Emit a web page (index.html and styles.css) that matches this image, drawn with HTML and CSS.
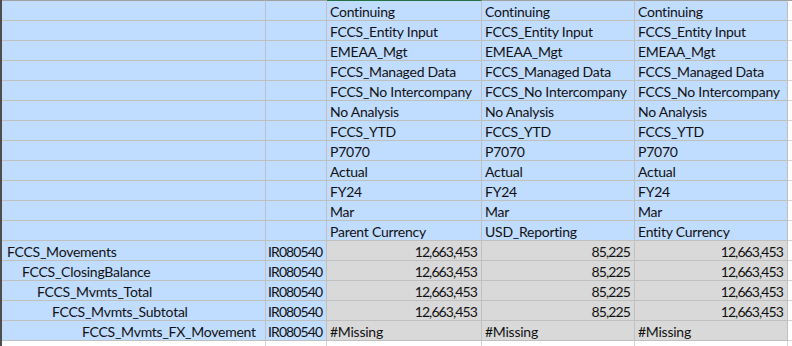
FILE: index.html
```html
<!DOCTYPE html>
<html>
<head>
<meta charset="utf-8">
<link rel="stylesheet" href="styles.css">
</head>
<body>
<div class="sheet">
  <div class="row first">
    <div class="c a"></div><div class="c b"></div>
    <div class="c h sel">Continuing</div><div class="c h">Continuing</div><div class="c h">Continuing</div><div class="c f"></div>
  </div>
  <div class="row">
    <div class="c a"></div><div class="c b"></div>
    <div class="c h">FCCS_Entity Input</div><div class="c h">FCCS_Entity Input</div><div class="c h">FCCS_Entity Input</div><div class="c f"></div>
  </div>
  <div class="row">
    <div class="c a"></div><div class="c b"></div>
    <div class="c h">EMEAA_Mgt</div><div class="c h">EMEAA_Mgt</div><div class="c h">EMEAA_Mgt</div><div class="c f"></div>
  </div>
  <div class="row">
    <div class="c a"></div><div class="c b"></div>
    <div class="c h">FCCS_Managed Data</div><div class="c h">FCCS_Managed Data</div><div class="c h">FCCS_Managed Data</div><div class="c f"></div>
  </div>
  <div class="row">
    <div class="c a"></div><div class="c b"></div>
    <div class="c h">FCCS_No Intercompany</div><div class="c h">FCCS_No Intercompany</div><div class="c h">FCCS_No Intercompany</div><div class="c f"></div>
  </div>
  <div class="row">
    <div class="c a"></div><div class="c b"></div>
    <div class="c h">No Analysis</div><div class="c h">No Analysis</div><div class="c h">No Analysis</div><div class="c f"></div>
  </div>
  <div class="row">
    <div class="c a"></div><div class="c b"></div>
    <div class="c h">FCCS_YTD</div><div class="c h">FCCS_YTD</div><div class="c h">FCCS_YTD</div><div class="c f"></div>
  </div>
  <div class="row">
    <div class="c a"></div><div class="c b"></div>
    <div class="c h">P7070</div><div class="c h">P7070</div><div class="c h">P7070</div><div class="c f"></div>
  </div>
  <div class="row">
    <div class="c a"></div><div class="c b"></div>
    <div class="c h">Actual</div><div class="c h">Actual</div><div class="c h">Actual</div><div class="c f"></div>
  </div>
  <div class="row">
    <div class="c a"></div><div class="c b"></div>
    <div class="c h">FY24</div><div class="c h">FY24</div><div class="c h">FY24</div><div class="c f"></div>
  </div>
  <div class="row">
    <div class="c a"></div><div class="c b"></div>
    <div class="c h">Mar</div><div class="c h">Mar</div><div class="c h">Mar</div><div class="c f"></div>
  </div>
  <div class="row">
    <div class="c a"></div><div class="c b"></div>
    <div class="c h">Parent Currency</div><div class="c h">USD_Reporting</div><div class="c h">Entity Currency</div><div class="c f"></div>
  </div>
  <div class="row">
    <div class="c a l0">FCCS_Movements</div><div class="c b">IR080540</div>
    <div class="c d num">12,663,453</div><div class="c d num">85,225</div><div class="c d num">12,663,453</div><div class="c f"></div>
  </div>
  <div class="row">
    <div class="c a l1">FCCS_ClosingBalance</div><div class="c b">IR080540</div>
    <div class="c d num">12,663,453</div><div class="c d num">85,225</div><div class="c d num">12,663,453</div><div class="c f"></div>
  </div>
  <div class="row">
    <div class="c a l2">FCCS_Mvmts_Total</div><div class="c b">IR080540</div>
    <div class="c d num">12,663,453</div><div class="c d num">85,225</div><div class="c d num">12,663,453</div><div class="c f"></div>
  </div>
  <div class="row">
    <div class="c a l3">FCCS_Mvmts_Subtotal</div><div class="c b">IR080540</div>
    <div class="c d num">12,663,453</div><div class="c d num">85,225</div><div class="c d num">12,663,453</div><div class="c f"></div>
  </div>
  <div class="row">
    <div class="c a l5">FCCS_Mvmts_FX_Movement</div><div class="c b">IR080540</div>
    <div class="c d">#Missing</div><div class="c d">#Missing</div><div class="c d">#Missing</div><div class="c f"></div>
  </div>
  <div class="row empty">
    <div class="c e"></div><div class="c e"></div><div class="c e"></div><div class="c e"></div><div class="c e"></div><div class="c e"></div>
  </div>
</div>
</body>
</html>
```
FILE: styles.css
```css
html, body {
  margin: 0;
  padding: 0;
  background: #ffffff;
}
.sheet {
  border-left: 2px solid #4d4d4d;
  font-family: "Lato", "Liberation Sans", sans-serif;
  font-size: 14px;
  letter-spacing: -0.25px;
  color: #111111;
  width: 790px;
  overflow: hidden;
}
.row {
  display: grid;
  grid-template-columns: 264px 61px 155px 153px 153px 4px;
  height: 20px;
}
.row.first {
  height: 21px;
}
.c {
  box-sizing: border-box;
  border-right: 1px solid #c0c0c0;
  border-bottom: 1px solid #c0c0c0;
  background: #c0dcff;
  padding: 1px 3px 0 3px;
  line-height: 19px;
  white-space: nowrap;
  overflow: hidden;
}
.first .c {
  border-top: 1px solid #a0a0a0;
}
.first .c.sel {
  border-top-color: #217346;
}
.b {
  padding-left: 2px;
  letter-spacing: -0.9px;
}
.d {
  background: #d9d9d9;
}
.num {
  text-align: right;
  padding-right: 4px;
  letter-spacing: -0.9px;
}
.f {
  background: #ffffff;
  border-right: none;
  border-bottom-color: #d4d4d4;
}
.first .c.f {
  border-top-color: #a0a0a0;
}
.e {
  background: #ffffff;
  border-right-color: #d4d4d4;
  border-bottom: none;
}
.l0 { padding-left: 5px; }
.l1 { padding-left: 20px; }
.l2 { padding-left: 35px; }
.l3 { padding-left: 50px; }
.l5 { padding-left: 80px; }
```
